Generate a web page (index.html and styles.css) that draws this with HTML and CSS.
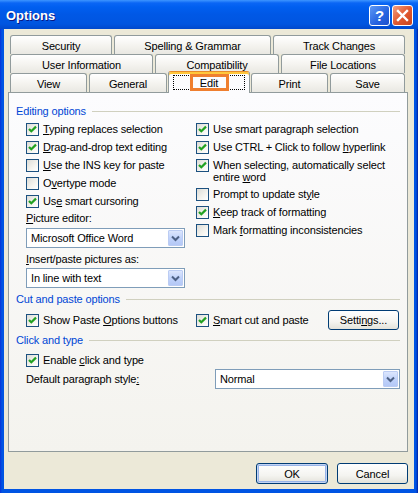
FILE: index.html
```html
<!DOCTYPE html>
<html>
<head>
<meta charset="utf-8">
<link rel="stylesheet" href="styles.css">
</head>
<body>
<div class="window">
  <div class="titlebar">
    <span class="title">Options</span>
    <span class="tbtn help">?</span>
    <span class="tbtn close"><svg width="13" height="13" viewBox="0 0 13 13"><path d="M2 2 L11 11 M11 2 L2 11" stroke="#fff" stroke-width="2.4" stroke-linecap="square"/></svg></span>
  </div>
  <div class="client">
    <div class="tabs">
      <div class="row">
        <div class="tab w-sec">Security</div>
        <div class="tab w-spell">Spelling &amp; Grammar</div>
        <div class="tab w-track">Track Changes</div>
      </div>
      <div class="row">
        <div class="tab w-user">User Information</div>
        <div class="tab w-compat">Compatibility</div>
        <div class="tab w-file">File Locations</div>
      </div>
      <div class="row">
        <div class="tab w-view">View</div>
        <div class="tab w-gen">General</div>
        <div class="tab sel w-edit"><span class="focus"><span class="mark">Edit</span></span></div>
        <div class="tab w-print">Print</div>
        <div class="tab w-save">Save</div>
      </div>
    </div>
    <div class="panel">
      <div class="group">Editing options</div>
      <div class="cols">
        <div class="col left">
          <div class="cbrow"><span class="cb on"><svg width="11" height="11" viewBox="0 0 11 11"><path d="M2 5 L4.3 7.3 L9 2.6" fill="none" stroke="#21A121" stroke-width="2.2"/></svg></span><span><u>T</u>yping replaces selection</span></div>
          <div class="cbrow"><span class="cb on"><svg width="11" height="11" viewBox="0 0 11 11"><path d="M2 5 L4.3 7.3 L9 2.6" fill="none" stroke="#21A121" stroke-width="2.2"/></svg></span><span><u>D</u>rag-and-drop text editing</span></div>
          <div class="cbrow"><span class="cb"></span><span><u>U</u>se the INS key for paste</span></div>
          <div class="cbrow"><span class="cb"></span><span>O<u>v</u>ertype mode</span></div>
          <div class="cbrow"><span class="cb on"><svg width="11" height="11" viewBox="0 0 11 11"><path d="M2 5 L4.3 7.3 L9 2.6" fill="none" stroke="#21A121" stroke-width="2.2"/></svg></span><span>Us<u>e</u> smart cursoring</span></div>
          <div class="lbl first"><u>P</u>icture editor:</div>
          <div class="select w-sel"><span class="val">Microsoft Office Word</span><span class="arrow"><svg width="9" height="7" viewBox="0 0 9 7"><path d="M1 1.5 L4.5 5 L8 1.5" fill="none" stroke="#4D6185" stroke-width="2"/></svg></span></div>
          <div class="lbl second"><u>I</u>nsert/paste pictures as:</div>
          <div class="select w-sel sel2"><span class="val">In line with text</span><span class="arrow"><svg width="9" height="7" viewBox="0 0 9 7"><path d="M1 1.5 L4.5 5 L8 1.5" fill="none" stroke="#4D6185" stroke-width="2"/></svg></span></div>
        </div>
        <div class="col right">
          <div class="cbrow"><span class="cb on"><svg width="11" height="11" viewBox="0 0 11 11"><path d="M2 5 L4.3 7.3 L9 2.6" fill="none" stroke="#21A121" stroke-width="2.2"/></svg></span><span>Use smart paragraph selection</span></div>
          <div class="cbrow"><span class="cb on"><svg width="11" height="11" viewBox="0 0 11 11"><path d="M2 5 L4.3 7.3 L9 2.6" fill="none" stroke="#21A121" stroke-width="2.2"/></svg></span><span>Use CTRL + Click to follow <u>h</u>yperlink</span></div>
          <div class="cbrow two"><span class="cb on"><svg width="11" height="11" viewBox="0 0 11 11"><path d="M2 5 L4.3 7.3 L9 2.6" fill="none" stroke="#21A121" stroke-width="2.2"/></svg></span><span>When selecting, automatically select<br>entire <u>w</u>ord</span></div>
          <div class="cbrow"><span class="cb"></span><span>Prompt to update st<u>y</u>le</span></div>
          <div class="cbrow"><span class="cb on"><svg width="11" height="11" viewBox="0 0 11 11"><path d="M2 5 L4.3 7.3 L9 2.6" fill="none" stroke="#21A121" stroke-width="2.2"/></svg></span><span><u>K</u>eep track of formatting</span></div>
          <div class="cbrow"><span class="cb"></span><span>Mark <u>f</u>ormatting inconsistencies</span></div>
        </div>
      </div>
      <div class="group g2">Cut and paste options</div>
      <div class="line cutrow">
        <div class="cbrow colw"><span class="cb on"><svg width="11" height="11" viewBox="0 0 11 11"><path d="M2 5 L4.3 7.3 L9 2.6" fill="none" stroke="#21A121" stroke-width="2.2"/></svg></span><span>Show Paste <u>O</u>ptions buttons</span></div>
        <div class="cbrow"><span class="cb on"><svg width="11" height="11" viewBox="0 0 11 11"><path d="M2 5 L4.3 7.3 L9 2.6" fill="none" stroke="#21A121" stroke-width="2.2"/></svg></span><span><u>S</u>mart cut and paste</span></div>
        <div class="btn settings">Setti<u>n</u>gs...</div>
      </div>
      <div class="group g3">Click and type</div>
      <div class="line enrow">
        <div class="cbrow"><span class="cb on"><svg width="11" height="11" viewBox="0 0 11 11"><path d="M2 5 L4.3 7.3 L9 2.6" fill="none" stroke="#21A121" stroke-width="2.2"/></svg></span><span>Enable <u>c</u>lick and type</span></div>
      </div>
      <div class="line pararow">
        <span class="plabel">Default paragraph style<u>:</u></span>
        <div class="select w-para"><span class="val">Normal</span><span class="arrow"><svg width="9" height="7" viewBox="0 0 9 7"><path d="M1 1.5 L4.5 5 L8 1.5" fill="none" stroke="#4D6185" stroke-width="2"/></svg></span></div>
      </div>
    </div>
    <div class="footer">
      <div class="btn ok">OK</div>
      <div class="btn cancel">Cancel</div>
    </div>
  </div>
</div>
</body>
</html>
```
FILE: styles.css
```css
html, body {
  margin: 0;
  padding: 0;
}
body {
  width: 418px;
  height: 493px;
  overflow: hidden;
  font-family: "Liberation Sans", Arial, sans-serif;
  font-size: 11px;
  letter-spacing: -0.15px;
  color: #000;
}
.window {
  width: 418px;
  height: 493px;
  display: flex;
  flex-direction: column;
  background: linear-gradient(90deg, #0831D9 0px, #0054E3 2px, #0054E3 416px, #001EA0 418px);
}
.titlebar {
  height: 29px;
  display: flex;
  align-items: center;
  padding: 0 5px 0 6px;
  background: linear-gradient(#3D95FF 0px, #0A66F5 3px, #005FF0 7px, #0058E6 14px, #0055E0 24px, #0048CC 29px);
}
.title {
  flex: 1;
  color: #fff;
  font-weight: bold;
  font-size: 13px;
  letter-spacing: 0;
  text-shadow: 1px 1px 0 #0A1883;
  margin-top: 1px;
}
.tbtn {
  width: 19px;
  height: 19px;
  border: 1px solid #fff;
  border-radius: 3px;
  display: flex;
  align-items: center;
  justify-content: center;
  color: #fff;
  font-weight: bold;
  font-size: 15px;
  margin-top: 1px;
}
.help {
  background: linear-gradient(135deg, #5C98F5, #2663E0 60%, #1E50CC);
  margin-right: 2px;
}
.close {
  background: linear-gradient(135deg, #F1A184, #E35A31 50%, #C9431C);
}
.client {
  flex: 1;
  margin: 0 4px 4px 4px;
  background: #ECE9D8;
  padding: 6px 6px 0 4px;
  display: flex;
  flex-direction: column;
}
.tabs {
  display: flex;
  flex-direction: column;
  padding-left: 2px;
}
.row {
  display: flex;
  height: 19px;
  gap: 2px;
}
.tab {
  height: 19px;
  box-sizing: border-box;
  border: 1px solid #919B9C;
  border-bottom: none;
  border-radius: 3px 3px 0 0;
  background: linear-gradient(#FFFFFF, #F5F4F0 50%, #E9E8E2);
  display: flex;
  justify-content: center;
  align-items: center;
  padding-top: 2px;
}
.w-sec { width: 102px; }
.w-spell { width: 157px; }
.w-track { width: 132px; }
.w-user { width: 143px; }
.w-compat { width: 124px; }
.w-file { width: 124px; }
.w-view { width: 77px; }
.w-gen { width: 78px; }
.w-edit { width: 82px; margin-left: -1px; }
.w-print { width: 77px; margin-left: -1px; }
.w-save { width: 75px; }
.tab.sel {
  height: 22px;
  margin-top: -2px;
  margin-bottom: -1px;
  position: relative;
  z-index: 2;
  background: #FCFCFE;
  border-top: 1px solid #E68B2C;
  box-shadow: inset 0 2px 0 #FFC73C;
  padding-top: 2px;
  align-items: flex-start;
}
.focus {
  width: 72px;
  height: 15px;
  box-sizing: border-box;
  border: 1px dotted #000;
  display: flex;
  justify-content: center;
  margin-top: 1px;
}
.mark {
  width: 39px;
  height: 17px;
  box-sizing: border-box;
  border: 3px solid #EF7F2F;
  display: flex;
  justify-content: center;
  align-items: center;
  margin-top: -2px;
  background: #FCFCFE;
}
.panel {
  flex: 1;
  border: 1px solid #919B9C;
  background: linear-gradient(#FCFCFE, #F4F3EE);
  padding: 11px 7px 0 7px;
  display: flex;
  flex-direction: column;
  position: relative;
  z-index: 1;
}
.group {
  height: 14px;
  line-height: 14px;
  color: #0046D5;
  display: flex;
  align-items: center;
}
.group::after {
  content: "";
  flex: 1;
  height: 1px;
  background: #D0D0BF;
  margin-left: 6px;
}
.cols {
  display: flex;
  margin-top: 2px;
  padding-left: 10px;
}
.col {
  display: flex;
  flex-direction: column;
}
.left { width: 170px; }
.cbrow {
  height: 18px;
  display: flex;
  align-items: center;
  white-space: nowrap;
}
.cbrow.two {
  height: 29px;
  align-items: flex-start;
  line-height: 12px;
  padding-top: 3px;
  box-sizing: border-box;
}
.cb {
  width: 13px;
  height: 13px;
  box-sizing: border-box;
  border: 1px solid #1C5180;
  background: linear-gradient(135deg, #DCDCD7, #F5F4EF 60%, #FFFFFF);
  margin-right: 4px;
  flex: none;
  display: flex;
  align-items: center;
  justify-content: center;
}
.lbl {
  height: 14px;
  line-height: 14px;
}
.lbl.first { margin-top: 1px; }
.lbl.second { margin-top: 4px; }
.select {
  height: 20px;
  box-sizing: border-box;
  border: 1px solid #7F9DB9;
  background: #fff;
  display: flex;
  align-items: center;
  padding: 1px;
  margin-top: 3px;
}
.sel2 { margin-top: 2px; }
.w-sel { width: 159px; }
.w-para { width: 185px; margin-top: 0; margin-left: auto; }
.val {
  flex: 1;
  padding-left: 3px;
}
.arrow {
  width: 15px;
  height: 16px;
  box-sizing: border-box;
  border: 1px solid #BBCCF3;
  border-radius: 1px;
  background: linear-gradient(#DCE6FD, #C1D3FB 50%, #B4C8F6);
  display: flex;
  align-items: center;
  justify-content: center;
}
.g2 { margin-top: 4px; }
.g3 { margin-top: 3px; }
.line {
  display: flex;
  align-items: center;
  padding-left: 10px;
}
.cutrow {
  height: 20px;
  margin-top: 4px;
}
.colw { width: 170px; }
.btn {
  box-sizing: border-box;
  border: 1px solid #003C74;
  border-radius: 3px;
  background: linear-gradient(#FFFFFF, #F4F4F0 60%, #E3E2DA);
  display: flex;
  align-items: center;
  justify-content: center;
}
.settings {
  width: 71px;
  height: 20px;
  margin-left: auto;
  margin-right: 1px;
}
.enrow {
  height: 18px;
  margin-top: 4px;
}
.pararow {
  height: 20px;
}
.footer {
  height: 37px;
  box-sizing: border-box;
  padding: 11px 0 5px 0;
  display: flex;
  justify-content: flex-end;
  gap: 9px;
}
.ok, .cancel {
  width: 72px;
  height: 21px;
}
.ok {
  box-shadow: inset 0 0 0 1px #C3D4F4, inset 0 0 0 2px #98B4E8;
}
.cancel {
  width: 71px;
}
```
